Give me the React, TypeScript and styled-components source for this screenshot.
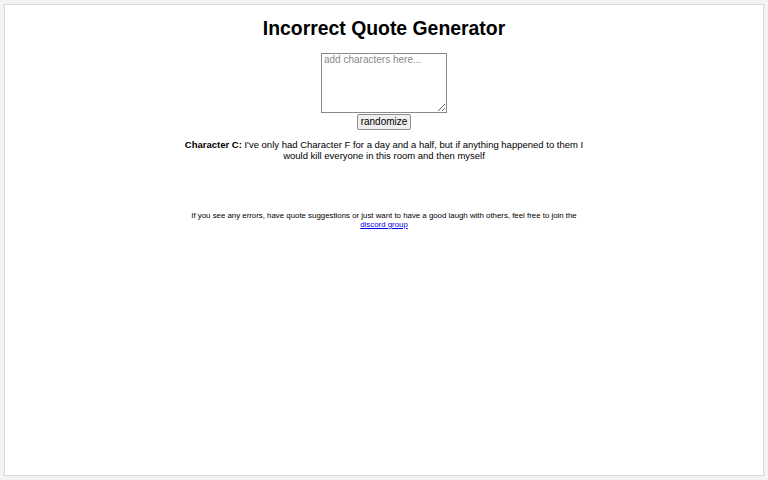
import styled, { createGlobalStyle } from "styled-components";

const GlobalStyle = createGlobalStyle`
  html, body {
    margin: 0;
    background: #f4f4f4;
  }
  body {
    padding: 4px;
    font-family: "Liberation Sans", Arial, sans-serif;
    color: #000;
  }
`;

const App = () => {
  return (
    <>
      <GlobalStyle />
      <Card>
        <Title>Incorrect Quote Generator</Title>
        <Controls>
          <CharacterInput placeholder="add characters here..." />
          <RandomButton type="button">randomize</RandomButton>
        </Controls>
        <Quote>
          <Speaker>Character C:</Speaker> I've only had Character F for a day and a half, but if
          anything happened to them I would kill everyone in this room and then myself
        </Quote>
        <Footer>
          If you see any errors, have quote suggestions or just want to have a good laugh with
          others, feel free to join the <br />
          <a href="#">discord group</a>
        </Footer>
      </Card>
    </>
  );
};

export default App;

const Card = styled.main`
  box-sizing: border-box;
  height: 472px;
  background: #fff;
  border: 1px solid #dcdcdc;
  box-shadow: 0 0 2px rgba(0, 0, 0, 0.06);
  display: flex;
  flex-direction: column;
  align-items: center;
  padding-top: 12px;
`;

const Title = styled.h1`
  margin: 0;
  font-size: 19.4px;
  line-height: 23px;
  font-weight: bold;
`;

const Controls = styled.div`
  margin-top: 13px;
  display: flex;
  flex-direction: column;
  align-items: center;
  gap: 1px;
`;

const CharacterInput = styled.textarea`
  box-sizing: border-box;
  width: 126px;
  height: 60px;
  margin: 0;
  padding: 0 2px;
  border: 1px solid #8a8a8a;
  font-family: "Liberation Sans", Arial, sans-serif;
  font-size: 10px;

  &::placeholder {
    color: #8a8a8a;
  }
`;

const RandomButton = styled.button`
  box-sizing: border-box;
  height: 16px;
  padding: 0 3px;
  margin: 0;
  font-family: "Liberation Sans", Arial, sans-serif;
  font-size: 10px;
  line-height: 14px;
  color: #000;
  background: #efefef;
  border: 1px solid #8f8f8f;
  border-radius: 2px;
`;

const Quote = styled.p`
  margin: 9px 0 0;
  max-width: 410px;
  font-size: 9.5px;
  line-height: 11px;
  text-align: center;
`;

const Speaker = styled.b`
  font-weight: bold;
`;

const Footer = styled.p`
  margin: 50px 0 0;
  font-size: 7.85px;
  line-height: 9px;
  text-align: center;

  a {
    color: #0000ee;
  }
`;
